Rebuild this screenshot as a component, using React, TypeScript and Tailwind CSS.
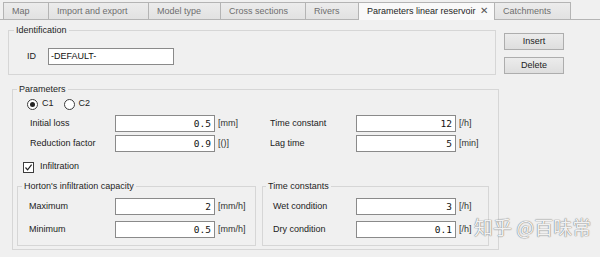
import React from 'react';

const tabs = [
  { label: 'Map', w: 'w-[46px]' },
  { label: 'Import and export', w: 'w-[101px]' },
  { label: 'Model type', w: 'w-[73px]' },
  { label: 'Cross sections', w: 'w-[86px]' },
  { label: 'Rivers', w: 'w-[54px]' },
];

const Tab: React.FC<{ label: string; w: string }> = ({ label, w }) => (
  <div
    className={`${w} h-[17px] shrink-0 border-l border-t border-r border-[#b4b4b4] -ml-px first:ml-0 bg-gradient-to-b from-[#ececec] to-[#e2e2e2] pl-[8px] text-[#6e6e6e] leading-[16px]`}
  >
    {label}
  </div>
);

const NumInput: React.FC<{ value: string; w?: string }> = ({ value, w = 'w-[100px]' }) => (
  <div
    className={`${w} h-[17px] shrink-0 bg-white border border-[#8a8a8a] pr-[3px] text-right text-[#111] leading-[15px] text-[9.5px] [font-family:'DejaVu_Sans_Mono',monospace]`}
  >
    {value}
  </div>
);

const Unit: React.FC<{ children: React.ReactNode; w?: string }> = ({ children, w = '' }) => (
  <span className={`${w} shrink-0 pl-[3px] text-[#333]`}>{children}</span>
);

const Legend: React.FC<{ children: React.ReactNode; ml?: string }> = ({ children, ml = 'ml-[5px]' }) => (
  <legend className={`${ml} px-[2px] leading-[13px] text-[#1e1e1e]`}>{children}</legend>
);

const Radio: React.FC<{ checked?: boolean; label: string }> = ({ checked, label }) => (
  <div className="flex items-center gap-[4px]">
    <div className="w-[11px] h-[11px] rounded-full border border-[#3c3c3c] bg-white flex items-center justify-center">
      {checked && <div className="w-[5px] h-[5px] rounded-full bg-[#222]" />}
    </div>
    <span className="text-[#222]">{label}</span>
  </div>
);

export default function App() {
  return (
    <div className="relative w-[600px] h-[257px] overflow-hidden bg-[#f0f0f0] text-[9px] [font-family:'Liberation_Sans',Arial,sans-serif]">
      {/* tab strip */}
      <div className="flex items-end h-[20px] pl-[3px] border-b border-[#b4b4b4]">
        {tabs.map((t) => (
          <Tab key={t.label} {...t} />
        ))}
        <div className="w-[137px] h-[18px] shrink-0 -ml-px -mb-px border-l border-t border-r border-[#b4b4b4] bg-[#f9f9f9] pl-[8px] pr-[6px] flex items-start justify-between text-[#1e1e1e] leading-[16px]">
          <span>Parameters linear reservoir</span>
          <span className="text-[#555] text-[10px]">✕</span>
        </div>
        <Tab label="Catchments" w="w-[77px]" />
      </div>

      <div className="flex pt-[4px]">
        <div className="ml-[8px] w-[491px] flex flex-col">
          {/* Identification */}
          <fieldset className="w-[488px] border border-[#d6d6d6] pb-[9px]">
            <Legend>Identification</Legend>
            <div className="flex items-center mt-[11px] pl-[18px]">
              <span className="w-[21px] text-[#222]">ID</span>
              <div className="w-[126px] h-[17px] bg-white border border-[#8a8a8a] pl-[2px] leading-[15px] text-[#111]">
                -DEFAULT-
              </div>
            </div>
          </fieldset>

          {/* Parameters */}
          <fieldset className="ml-[4px] w-[487px] mt-[8px] border border-[#d6d6d6] pb-[3px]">
            <Legend ml="ml-[4px]">Parameters</Legend>
            <div className="flex items-center gap-[10px] pl-[14px] mt-[2px] h-[12px]">
              <Radio checked label="C1" />
              <Radio label="C2" />
            </div>

            <div className="flex flex-col gap-[3px] mt-[5px] pl-[17px] text-[#222]">
              <div className="flex items-center">
                <span className="w-[85px] shrink-0">Initial loss</span>
                <NumInput value="0.5" />
                <Unit w="w-[55px]">[mm]</Unit>
                <span className="w-[86px] shrink-0">Time constant</span>
                <NumInput value="12" />
                <Unit>[/h]</Unit>
              </div>
              <div className="flex items-center">
                <span className="w-[85px] shrink-0">Reduction factor</span>
                <NumInput value="0.9" />
                <Unit w="w-[55px]">[()]</Unit>
                <span className="w-[86px] shrink-0">Lag time</span>
                <NumInput value="5" />
                <Unit>[min]</Unit>
              </div>
            </div>

            <div className="flex items-center gap-[6px] pl-[10px] mt-[9px] h-[12px]">
              <div className="w-[11px] h-[11px] border border-[#3c3c3c] bg-white flex items-center justify-center">
                <svg width="9" height="9" viewBox="0 0 9 9">
                  <path d="M1.5 4.5 L3.6 6.8 L7.6 1.6" fill="none" stroke="#222" strokeWidth="1.2" />
                </svg>
              </div>
              <span className="text-[#222]">Infiltration</span>
            </div>

            <div className="flex mt-[7px] ml-[4px]">
              <fieldset className="w-[239px] border border-[#d6d6d6] pb-[7px] text-[#222]">
                <Legend ml="ml-[4px]">Horton's infiltration capacity</Legend>
                <div className="flex flex-col gap-[6px] mt-[5px] pl-[11px]">
                  <div className="flex items-center">
                    <span className="w-[86px] shrink-0">Maximum</span>
                    <NumInput value="2" />
                    <Unit>[mm/h]</Unit>
                  </div>
                  <div className="flex items-center">
                    <span className="w-[86px] shrink-0">Minimum</span>
                    <NumInput value="0.5" />
                    <Unit>[mm/h]</Unit>
                  </div>
                </div>
              </fieldset>
              <fieldset className="ml-[6px] w-[227px] border border-[#d6d6d6] pb-[7px] text-[#222]">
                <Legend ml="ml-[3px]">Time constants</Legend>
                <div className="flex flex-col gap-[6px] mt-[5px] pl-[10px]">
                  <div className="flex items-center">
                    <span className="w-[83px] shrink-0">Wet condition</span>
                    <NumInput value="3" />
                    <Unit>[/h]</Unit>
                  </div>
                  <div className="flex items-center">
                    <span className="w-[83px] shrink-0">Dry condition</span>
                    <NumInput value="0.1" />
                    <Unit>[/h]</Unit>
                  </div>
                </div>
              </fieldset>
            </div>
          </fieldset>
        </div>

        {/* buttons */}
        <div className="ml-[5px] mt-[9px] flex flex-col gap-[7px]">
          <button className="w-[60px] h-[17px] border border-[#adadad] bg-gradient-to-b from-[#ececec] to-[#dedede] text-[#222] leading-[15px]">
            Insert
          </button>
          <button className="w-[60px] h-[17px] border border-[#adadad] bg-gradient-to-b from-[#ececec] to-[#dedede] text-[#222] leading-[15px]">
            Delete
          </button>
        </div>
      </div>

      {/* watermark */}
      <div className="absolute left-[474px] top-[214px] whitespace-nowrap text-[19px] leading-[26px] text-white/90 [text-shadow:0_0_1px_#777,0_0_1px_#777] [font-family:'Noto_Sans_CJK_SC',sans-serif]">
        知乎 @百味常
      </div>
    </div>
  );
}
